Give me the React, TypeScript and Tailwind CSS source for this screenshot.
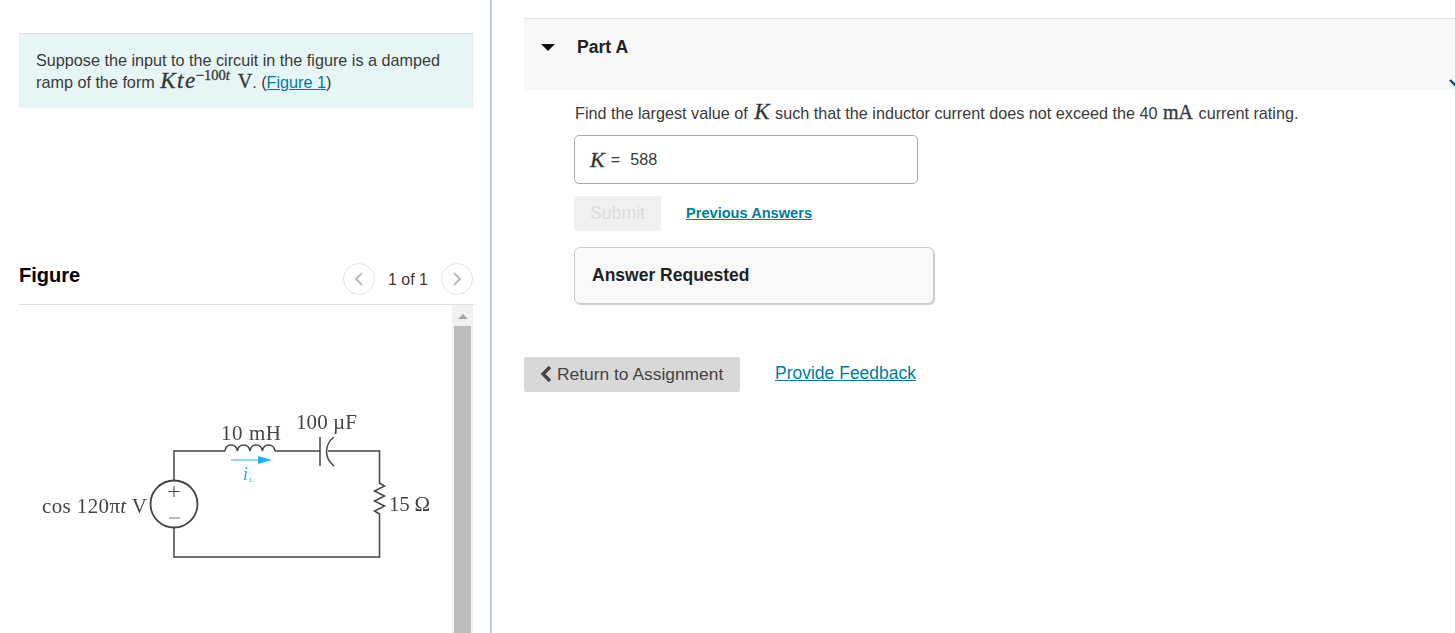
import React from "react";

const M = ({ children, className = "" }: { children: React.ReactNode; className?: string }) => (
  <span className={`font-['Liberation_Serif',serif] [-webkit-text-stroke:0.35px_#444] text-[#333] ${className}`}>{children}</span>
);

function Circuit() {
  const serif = "'Liberation Serif', serif";
  return (
    <svg viewBox="19 305 433 328" className="w-[433px] h-[328px] blur-[0.4px]" fill="none">
      <g stroke="#444" strokeWidth="1.5">
        <path d="M174 480V451H225M275 451H320M328 451H379.5V483l5 3-10 5 10 5-10 5 10 5-10 5 5 3V557H174V528" />
        <path d="M225 451c1-8 11-8 12.5 0c1-8 11-8 12.5 0c1-8 11-8 12.5 0c1-8 11-8 12.5 0" />
        <path d="M320 437V466" />
        <path d="M334 437C324 445 324 458 334 466" />
        <circle cx="174" cy="504" r="23.5" strokeWidth="1.8" />
        <path d="M174 486V497M168.5 491.5H179.5" strokeWidth="1" />
        <path d="M169 518H180" stroke="#999" strokeWidth="1.4" />
      </g>
      <path d="M231 460H260" stroke="#1fb4f0" strokeWidth="1" />
      <path d="M258 456L272 460L258 464Z" fill="#1fb4f0" />
      <g fill="#444" fontFamily={serif} fontSize="21">
        <text x="42" y="513" textLength="105">cos 120π<tspan fontStyle="italic">t</tspan> V</text>
        <text x="221" y="440" textLength="60">10 mH</text>
        <text x="296" y="429" textLength="61">100 µF</text>
        <text x="389" y="511" textLength="41">15 Ω</text>
      </g>
      <text x="243" y="480" fill="#1fb4f0" fontFamily={serif} fontSize="18" fontStyle="italic">i</text>
      <text x="249" y="482" fill="#1fb4f0" fontFamily={serif} fontSize="7">L</text>
    </svg>
  );
}

function NavCircle({ dir }: { dir: "l" | "r" }) {
  return (
    <span className="w-[32px] h-[32px] rounded-full border border-[#e4e4e4] flex items-center justify-center">
      <svg viewBox="0 0 12 16" className="w-[12px] h-[16px]" fill="none" stroke="#bdbdbd" strokeWidth="2">
        <path d={dir === "l" ? "M9 2L3 8L9 14" : "M3 2L9 8L3 14"} />
      </svg>
    </span>
  );
}

export default function App() {
  return (
    <div className="w-[1455px] h-[633px] overflow-hidden flex bg-white font-['Liberation_Sans',sans-serif] text-[16.2px] text-[#3a3a3a]">
      <div className="w-[492px] h-full shrink-0 border-r-[2px] border-[#b9ccdc] pl-[19px] pr-[16px] pt-[33px] flex flex-col">
        <div className="h-[75px] bg-[#e6f5f6] border-t border-[#d6e2e5] pl-[17px] pt-[15px] leading-[22px]">
          <div>Suppose the input to the circuit in the figure is a damped</div>
          <div className="whitespace-nowrap">
            ramp of the form{" "}
            <M className="text-[23px] italic leading-[20px] tracking-[1.5px] ml-[1px]">Kte</M>
            <M className="text-[14.5px] relative -top-[8px] -ml-[1px]">−100<i>t</i></M>
            <M className="text-[20px] leading-[20px] ml-[8px]">V</M>. (
            <span className="text-[#007c9e] underline">Figure 1</span>)
          </div>
        </div>
        <div className="mt-[155px] h-[42px] flex items-start justify-between border-b border-[#e0e0e0]">
          <div className="text-[20px] font-bold text-black leading-[24px]">Figure</div>
          <div className="flex items-center gap-[13px] -mt-[1px] mr-[1px] text-[16px]">
            <NavCircle dir="l" />
            <span className="text-[#4a3530] leading-[32px] pt-[2px]">1 of 1</span>
            <NavCircle dir="r" />
          </div>
        </div>
        <div className="flex-1 flex min-h-0">
          <Circuit />
          <div className="w-[21px] bg-[#f1f1f1] flex flex-col items-center pt-[9px]">
            <span className="w-0 h-0 border-x-[5px] border-x-transparent border-b-[5px] border-b-[#a3a3a3]" />
            <span className="mt-[7px] w-[17px] flex-1 bg-[#bdbdbd]" />
          </div>
        </div>
      </div>

      <div className="flex-1 min-w-0 pl-[32px] pt-[18px] flex flex-col items-start">
        <div className="w-full h-[72px] bg-[#f8f8f8] border-t border-[#e0e0e0] flex items-start relative">
          <svg viewBox="0 0 14 7" className="w-[14px] h-[7px] ml-[17px] mt-[25px]" fill="#111">
            <path d="M0 0H14L7 7Z" />
          </svg>
          <span className="ml-[22px] mt-[18px] text-[17.6px] font-bold text-[#222] leading-[20px]">Part A</span>
          <svg viewBox="0 0 6 10" className="absolute right-0 top-[60px] w-[6px] h-[10px]" fill="none" stroke="#00566e" strokeWidth="2.4">
            <path d="M1 1L8 8" />
          </svg>
        </div>
        <div className="ml-[51px] mt-[12px] leading-[22px] whitespace-nowrap">
          Find the largest value of <M className="text-[23px] italic leading-[20px] ml-[2px] mr-[1px]">K</M> such that the inductor current does not exceed the 40 <M className="text-[20px] leading-[20px] mx-[1px]">mA</M> current rating.
        </div>
        <div className="ml-[50px] mt-[11px] w-[344px] h-[49px] border border-[#aaa] rounded-[5px] flex items-center pl-[15px]">
          <M className="text-[22px] italic">K</M>
          <span className="ml-[6px]">=</span>
          <span className="ml-[10px]">588</span>
        </div>
        <div className="ml-[50px] mt-[12px] flex items-center">
          <span className="w-[87px] h-[35px] bg-[#f0f0f0] rounded-[2px] text-[#dcdcdc] text-[17.7px] flex items-center justify-center">Submit</span>
          <span className="ml-[25px] text-[14.6px] font-bold text-[#007c9e] underline">Previous Answers</span>
        </div>
        <div className="ml-[50px] mt-[16px] w-[360px] h-[57px] bg-[#f9f9f9] border border-[#ccc] rounded-[6px] shadow-[1px_1px_1px_#ccc] pl-[17px] flex items-center text-[17.5px] font-bold text-[#222]">
          Answer Requested
        </div>
        <div className="mt-[53px] flex items-center">
          <span className="w-[216px] h-[35px] bg-[#d8d8d8] rounded-[2px] flex items-center pl-[16px] pb-[1px] text-[17.4px] text-[#444]">
            <svg viewBox="0 0 12 18" className="w-[12px] h-[18px] mr-[5px]" fill="none" stroke="#444" strokeWidth="3.4">
              <path d="M10 2L3 9L10 16" />
            </svg>
            Return to Assignment
          </span>
          <span className="ml-[35px] text-[17.5px] text-[#007c9e] underline -mt-[2px]">Provide Feedback</span>
        </div>
      </div>
    </div>
  );
}
